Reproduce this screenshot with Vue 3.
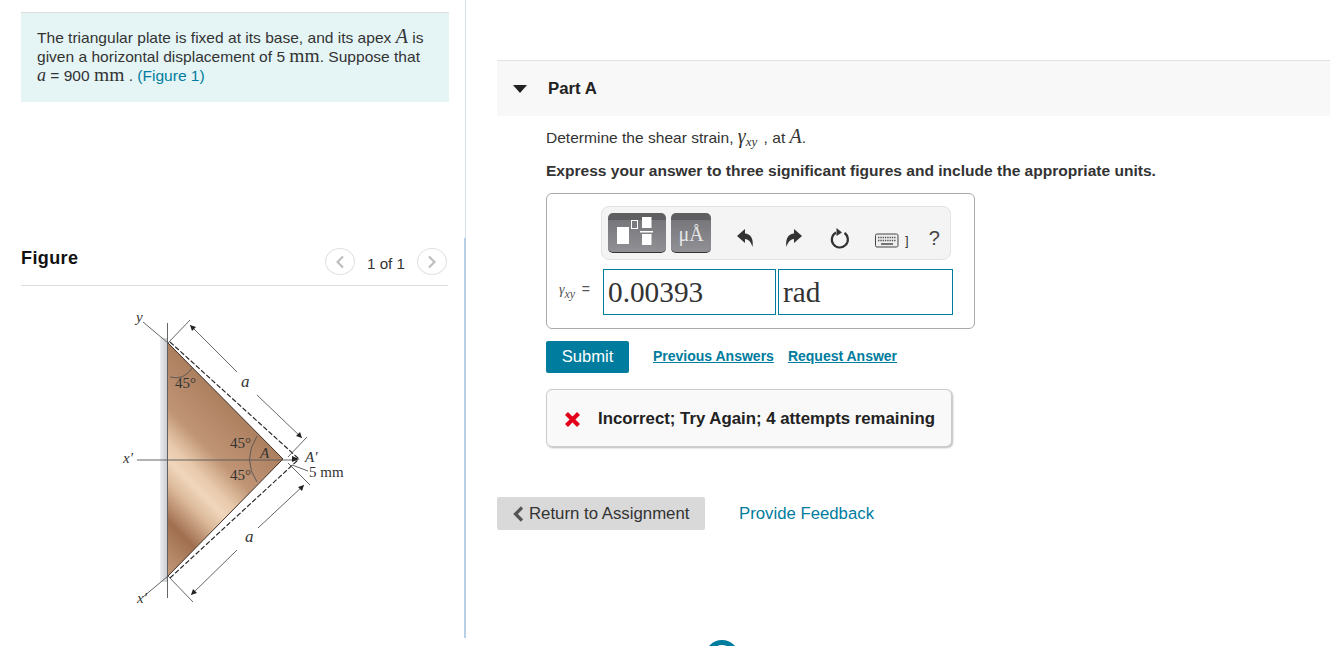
<script setup>
const dashes = [
  "M170 342 L299 459",
  "M170 578 L299 459",
]
</script>

<template>
  <div class="page">
    <section class="left">
      <div class="intro">
        The triangular plate is fixed at its base, and its apex <i class="math big">A</i> is given a horizontal displacement of 5 <span class="math unit">mm</span>. Suppose that
        <i class="math">a</i> = 900 <span class="math unit">mm</span> . <a class="link">(Figure 1)</a>
      </div>

      <div class="fig_head">
        <h2>Figure</h2>
        <div class="pager">
          <span class="circle">
            <svg width="10" height="14" viewBox="0 0 10 14"><path d="M8 1.5 L2.5 7 L8 12.5" fill="none" stroke="#bbb" stroke-width="2"/></svg>
          </span>
          <span class="count">1 of 1</span>
          <span class="circle">
            <svg width="10" height="14" viewBox="0 0 10 14"><path d="M2 1.5 L7.5 7 L2 12.5" fill="none" stroke="#bbb" stroke-width="2"/></svg>
          </span>
        </div>
      </div>

      <svg class="figure" width="260" height="320" viewBox="100 300 260 320">
        <defs>
          <linearGradient id="copper" gradientUnits="userSpaceOnUse" x1="225" y1="400" x2="108" y2="517">
            <stop offset="0" stop-color="#ac7f5f"/>
            <stop offset="0.28" stop-color="#c09575"/>
            <stop offset="0.42" stop-color="#e8c9ab"/>
            <stop offset="0.5" stop-color="#f0d6bc"/>
            <stop offset="0.6" stop-color="#dcb99a"/>
            <stop offset="0.76" stop-color="#a06f50"/>
            <stop offset="1" stop-color="#c49b7a"/>
          </linearGradient>
          <linearGradient id="wall" x1="0" y1="0" x2="1" y2="0">
            <stop offset="0" stop-color="#ecedf0"/>
            <stop offset="1" stop-color="#c8cacf"/>
          </linearGradient>
        </defs>
        <rect x="160" y="338" width="8" height="244" fill="url(#wall)"/>
        <polygon points="168,343 283,459 168,576" fill="url(#copper)"/>
        <path d="M168 343 L283 459 L168 576" fill="none" stroke="#3e2f26" stroke-width="1"/>
        <path v-for="d in dashes" :key="d" :d="d" fill="none" stroke="#2a2a2a" stroke-width="1.2" stroke-dasharray="5 2"/>
        <g fill="none" stroke="#555" stroke-width="0.9">
          <path d="M167.5 323 V598"/>
          <path d="M137 460 H298"/>
          <path d="M143 322 L168 343"/>
          <path d="M143 597 L168 576"/>
          <path d="M168 343 L190 320"/>
          <path d="M168 576 L193 602"/>
          <path d="M190 325 L237 372"/>
          <path d="M257 395 L302 438"/>
          <path d="M307 437 L288 457"/>
          <path d="M304 485 L258 528"/>
          <path d="M237 550 L191 595"/>
          <path d="M310 485 L288 463"/>
          <path d="M170 377 Q184 381 193 367"/>
          <path d="M257 436 Q242 460 257 482"/>
          <path d="M292 465 L308 471"/>
        </g>
        <g fill="#222">
          <path d="M299 459 L292 456 V462 Z"/>
          <path d="M190 325 L196 327 L192 331 Z"/>
          <path d="M302 438 L296 436 L300 432 Z"/>
          <path d="M304 485 L298 487 L302 491 Z"/>
          <path d="M191 595 L197 593 L193 589 Z"/>
        </g>
        <g class="fig_label">
          <text x="175" y="388">45°</text>
          <text x="230" y="448">45°</text>
          <text x="230" y="480">45°</text>
          <text x="260" y="458" font-style="italic">A</text>
          <text x="305" y="462" font-style="italic">A′</text>
          <text x="309" y="477">5 mm</text>
          <text class="side" x="241" y="387" font-style="italic">a</text>
          <text class="side" x="245" y="542" font-style="italic">a</text>
          <text x="136" y="322" font-style="italic">y</text>
          <text x="123" y="463" font-style="italic">x′</text>
          <text x="137" y="603" font-style="italic">x′</text>
        </g>
      </svg>
    </section>

    <div class="divider"></div>

    <section class="right">
      <div class="part_head">
        <span class="caret"></span>
        <span>Part A</span>
      </div>

      <div class="part_body">
        <p class="question">Determine the shear strain, <i class="math gamma">γ<sub>xy</sub></i> , at <i class="math big">A</i>.</p>
        <p class="instr">Express your answer to three significant figures and include the appropriate units.</p>

        <div class="answer">
          <div class="toolbar">
            <span class="tbtn wide">
              <svg width="58" height="40" viewBox="0 0 58 40">
                <rect x="9" y="14" width="12" height="17" fill="#fff"/>
                <rect x="23.5" y="7.5" width="6" height="8" fill="none" stroke="#fff"/>
                <rect x="34" y="4" width="9.5" height="11" fill="#fff"/>
                <rect x="32" y="18" width="13" height="1.5" fill="#fff"/>
                <rect x="34" y="21" width="9.5" height="11" fill="#fff"/>
              </svg>
            </span>
            <span class="tbtn narrow">μÅ</span>
            <svg class="undo" width="17" height="19" viewBox="0 0 17 19"><path d="M0 7 L8 0 V4.5 C13 5 17 9 15.5 18 C14 13 12 10.5 8 10 V14 Z" fill="#333"/></svg>
            <svg class="redo" width="17" height="19" viewBox="0 0 17 19"><path d="M17 7 L9 0 V4.5 C4 5 0 9 1.5 18 C3 13 5 10.5 9 10 V14 Z" fill="#333"/></svg>
            <svg class="reset" width="20" height="21" viewBox="0 0 20 21">
              <path d="M6 4.5 A8 8 0 1 0 14.5 5" fill="none" stroke="#333" stroke-width="2.2"/>
              <path d="M6.5 0 L12 4.5 L6.5 8 Z" fill="#333"/>
            </svg>
            <svg class="keys" width="24" height="15" viewBox="0 0 24 15">
              <rect x="0.5" y="1" width="22.5" height="13" rx="1.5" fill="#eee" stroke="#444"/>
              <path d="M3 4.5 H20.5 M3 7.5 H20.5" stroke="#555" stroke-width="1.6" stroke-dasharray="1.4 0.9"/>
              <path d="M6 11 H18" stroke="#555" stroke-width="1.6"/>
            </svg>
            <span class="bracket">]</span>
            <span class="help">?</span>
          </div>
          <div class="inputs">
            <span class="symbol"><i>γ<sub>xy</sub></i> <span class="eq">=</span></span>
            <span class="field value">0.00393</span>
            <span class="field units">rad</span>
          </div>
        </div>

        <div class="actions">
          <button class="submit">Submit</button>
          <a class="blink first">Previous Answers</a>
          <a class="blink">Request Answer</a>
        </div>

        <div class="feedback">
          <svg width="17" height="17" viewBox="0 0 17 17"><path d="M2.5 2.5 L14.5 14.5 M14.5 2.5 L2.5 14.5" stroke="#e2001a" stroke-width="4.2" fill="none"/></svg>
          <span>Incorrect; Try Again; 4 attempts remaining</span>
        </div>
      </div>

      <div class="bottom">
        <button class="back">
          <svg width="11" height="16" viewBox="0 0 11 16"><path d="M9 1.5 L2.5 8 L9 14.5" fill="none" stroke="#555" stroke-width="3.2"/></svg>
          Return to Assignment
        </button>
        <a class="link feedback_link">Provide Feedback</a>
      </div>
    </section>

    <span class="help_fab"></span>
  </div>
</template>

<style scoped>
.page {
  position: relative;
  display: flex;
  height: 646px;
  overflow: hidden;
  font-family: "Liberation Sans", Arial, sans-serif;
  font-size: 15.55px;
  color: #333;
}

.left {
  width: 428px;
  margin-left: 21px;
  margin-right: 15px;
  padding-top: 12px;
  flex: none;
}

.intro {
  height: 74px;
  border-top: 1px solid #dcdfe0;
  background: #e5f5f6;
  padding: 15px 16px 0;
  line-height: 19px;
}

.math {
  font-family: "Liberation Serif", "DejaVu Serif", serif;
  font-size: 18px;
  line-height: 0;
}

.math.big {
  font-size: 20px;
}

.math.unit {
  font-size: 19.5px;
}

.link {
  color: #007c9e;
}

.fig_head {
  display: flex;
  justify-content: space-between;
  align-items: center;
  margin-top: 144px;
  margin-right: 1px;
  height: 39px;
  border-bottom: 1px solid #ddd;
}

.fig_head h2 {
  margin: 0 0 15px;
  font-size: 18px;
  color: #111;
  letter-spacing: 0.4px;
}

.pager {
  display: flex;
  align-items: center;
  gap: 12px;
  margin-right: 1px;
  margin-bottom: 8px;
}

.circle {
  display: flex;
  align-items: center;
  justify-content: center;
  width: 30px;
  height: 27px;
  border: 1px solid #e2e2e2;
  border-radius: 50%;
  box-sizing: border-box;
}

.count {
  margin-top: 4px;
  font-size: 15.2px;
}

.figure {
  display: block;
  margin: 14px 0 0 79px;
}

.fig_label text {
  font-family: "Liberation Serif", serif;
  font-size: 15px;
  fill: #333;
}

.fig_label .side {
  font-size: 17px;
}

.divider {
  flex: none;
  width: 2px;
  height: 638px;
  background:
    linear-gradient(#d3e0ec, #d3e0ec) right top / 1px 238px no-repeat,
    linear-gradient(#b8cfe6, #b8cfe6) left 238px / 2px 100% no-repeat;
}

.right {
  flex: 1;
  margin-left: 31px;
  padding-top: 60px;
}

.part_head {
  display: flex;
  align-items: center;
  height: 55px;
  border-top: 1px solid #e2e2e2;
  background: #f8f8f8;
  font-size: 16.8px;
  font-weight: bold;
  color: #222;
}

.caret {
  width: 0;
  height: 0;
  margin: 0 21px 0 16px;
  border-left: 7px solid transparent;
  border-right: 7px solid transparent;
  border-top: 8px solid #222;
}

.part_body {
  padding-left: 49px;
}

.question {
  margin: 11px 0 0;
  line-height: 22px;
}

.gamma {
  margin-right: 2px;
  font-size: 20px;
}

.gamma sub {
  font-size: 13px;
  line-height: 0;
  vertical-align: -3px;
}

.instr {
  margin: 11px 0 0;
  font-weight: bold;
  line-height: 22px;
}

.answer {
  box-sizing: border-box;
  width: 429px;
  height: 136px;
  margin-top: 11px;
  padding: 12px 21px 0 12px;
  border: 1px solid #aaa;
  border-radius: 6px;
}

.toolbar {
  display: flex;
  align-items: center;
  box-sizing: border-box;
  width: 350px;
  height: 54px;
  margin-left: 42px;
  padding: 0 6px;
  border: 1px solid #e2e2e2;
  border-radius: 8px;
  background: #f4f4f4;
}

.tbtn {
  display: flex;
  align-items: center;
  justify-content: center;
  height: 40px;
  border-radius: 5px;
  border-bottom: 1px solid #333;
  box-sizing: border-box;
  background: linear-gradient(#5f5f61 0 7px, #77777b 7px, #909095);
  color: #e6e6e6;
  font-family: "Liberation Serif", serif;
  font-size: 20px;
}

.wide {
  width: 58px;
}

.narrow {
  width: 40px;
  margin-left: 5px;
  padding-top: 3px;
}

.undo {
  margin-left: 26px;
  margin-top: 11px;
}

.redo {
  margin-left: 31px;
  margin-top: 11px;
}

.reset {
  margin-left: 28px;
  margin-top: 11px;
}

.keys {
  margin-left: 25px;
  margin-top: 14px;
}

.bracket {
  margin-left: 6px;
  margin-top: 14px;
  font-size: 13px;
}

.help {
  margin-left: 20px;
  margin-top: 10px;
  font-size: 20px;
  color: #444;
}

.inputs {
  display: flex;
  align-items: center;
  margin-top: 9px;
}

.symbol {
  width: 44px;
  margin-bottom: 6px;
  font-family: "Liberation Serif", serif;
  font-size: 14px;
  color: #555;
  flex: none;
}

.symbol sub {
  font-size: 12px;
  line-height: 0;
}

.eq {
  margin-left: 3px;
  font-family: "Liberation Sans", sans-serif;
}

.field {
  box-sizing: border-box;
  height: 46px;
  padding-left: 4px;
  border: 1px solid #007c9e;
  font-family: "Liberation Serif", serif;
  font-size: 29.3px;
  line-height: 44px;
}

.value {
  width: 173px;
}

.units {
  width: 175px;
  margin-left: 2px;
}

.actions {
  display: flex;
  align-items: center;
  margin-top: 12px;
}

.submit {
  width: 83px;
  height: 32px;
  padding: 0;
  border: 0;
  border-radius: 2px;
  background: #007c9e;
  color: #fff;
  font-family: inherit;
  font-size: 16.6px;
}

.blink {
  margin-left: 14px;
  margin-bottom: 2px;
  color: #007c9e;
  font-size: 14px;
  font-weight: bold;
  text-decoration: underline;
}

.first {
  margin-left: 24px;
}

.feedback {
  display: flex;
  align-items: center;
  box-sizing: border-box;
  width: 406px;
  height: 58px;
  margin-top: 16px;
  padding: 2px 0 0 17px;
  gap: 17px;
  border: 1px solid #ccc;
  border-radius: 6px;
  background: #f9f9f9;
  box-shadow: 1px 1px 2px #bbb;
  font-size: 16.8px;
  font-weight: bold;
  color: #222;
}

.bottom {
  display: flex;
  align-items: center;
  margin-top: 50px;
}

.back {
  display: flex;
  align-items: center;
  gap: 5px;
  width: 208px;
  height: 33px;
  padding: 0 0 0 16px;
  border: 0;
  border-radius: 2px;
  background: #d9d9d9;
  color: #333;
  font-family: inherit;
  font-size: 16.8px;
}

.feedback_link {
  margin-left: 34px;
  font-size: 16.75px;
}

.help_fab {
  position: absolute;
  left: 705px;
  top: 640px;
  width: 34px;
  height: 34px;
  box-sizing: border-box;
  border: 5px solid #007c9e;
  border-radius: 50%;
}
</style>

<style>
body {
  overflow: hidden;
}
</style>
